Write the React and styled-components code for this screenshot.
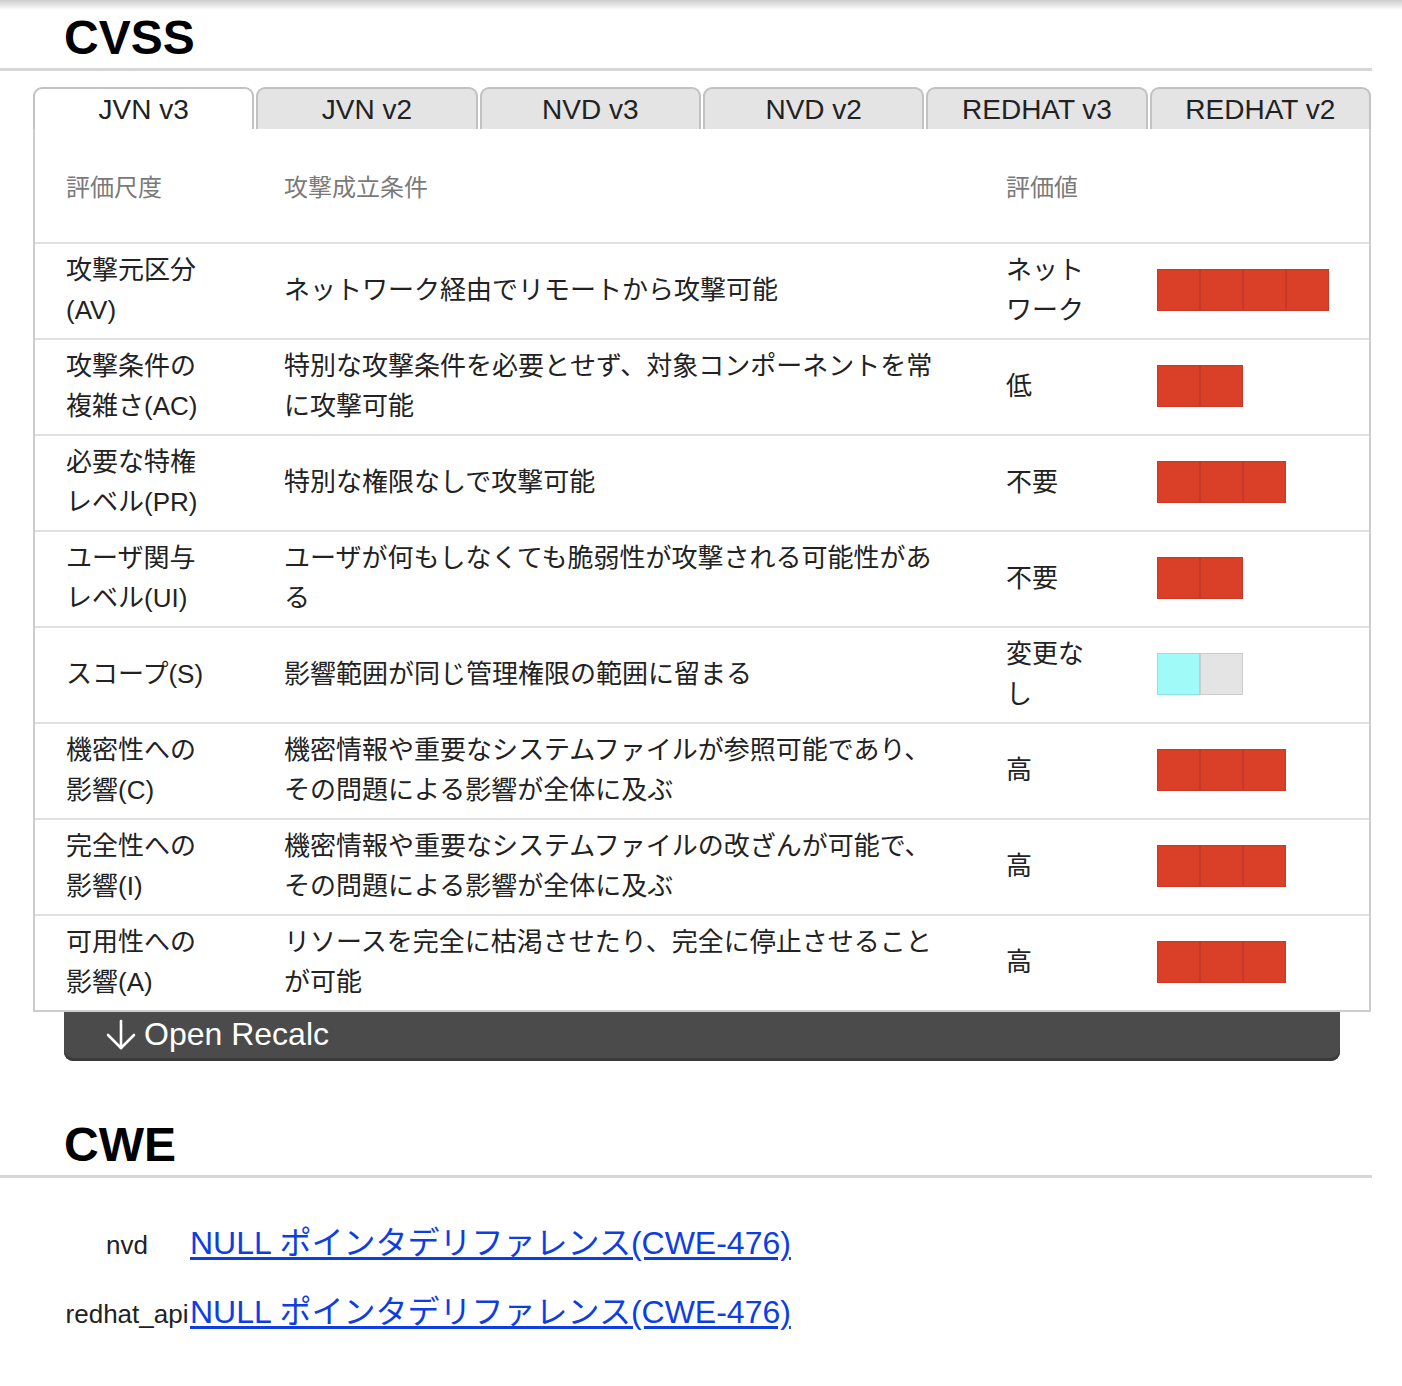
import React from 'react'
import styled, { createGlobalStyle } from 'styled-components'

const GlobalStyle = createGlobalStyle`
    body {
        margin: 0;
        background: #ffffff;
        font-family: "Liberation Sans", "Noto Sans CJK JP", sans-serif;
        color: #222222;
    }
`

const TopShadow = styled.div`
    height: 10px;
    background: linear-gradient(to bottom, rgba(0, 0, 0, 0.2), rgba(0, 0, 0, 0));
`

const Page = styled.div`
    width: 1372px;
    padding-bottom: 40px;
`

const SectionTitle = styled.h2`
    margin: ${(props) => props.$top}px 0 0;
    padding-left: 64px;
    font-size: 48px;
    line-height: 48px;
    font-weight: bold;
    color: #000000;
`

const Rule = styled.div`
    height: 3px;
    margin-top: 6px;
    background: #d6d6d6;
`

const Tabs = styled.div`
    display: flex;
    gap: 2px;
    margin: 16px 0 0 33px;
    width: 1338px;
`

const Tab = styled.div`
    flex: 1;
    height: 38px;
    padding-top: 2px;
    box-sizing: content-box;
    border: 2px solid #c2c2c2;
    border-bottom: none;
    border-radius: 9px 9px 0 0;
    background: ${(props) => (props.$active ? '#ffffff' : '#e4e4e4')};
    display: flex;
    align-items: center;
    justify-content: center;
    font-size: 28px;
    color: #222222;
`

const Panel = styled.div`
    margin-left: 33px;
    width: 1338px;
    box-sizing: border-box;
    border: 2px solid #cdcdcd;
    border-top: none;
`

const Table = styled.table`
    width: 100%;
    table-layout: fixed;
    border-collapse: separate;
    border-spacing: 0;
`

const HeadCell = styled.th`
    height: 113px;
    padding: 0 32px 0 31px;
    text-align: left;
    vertical-align: middle;
    font-size: 24px;
    font-weight: normal;
    color: #7a7a7a;
`

const Cell = styled.td`
    height: 96px;
    box-sizing: border-box;
    padding: 0 32px 2px 31px;
    border-top: 2px solid #e0e0e0;
    vertical-align: middle;
    font-size: 26px;
    line-height: 40px;
    color: #222222;
`

const Bar = styled.div`
    display: flex;
    padding-left: 1px;
`

const segmentColors = {
    red: ['#da3f27', '#c6382a'],
    cyan: ['#9ffaf8', '#8ee2e6'],
    off: ['#e4e4e4', '#cdcdcd'],
}

const Segment = styled.span`
    width: 43px;
    height: 42px;
    box-sizing: border-box;
    background: ${(props) => segmentColors[props.$kind][0]};
    border: 1px solid ${(props) => segmentColors[props.$kind][1]};
`

const RecalcBar = styled.div`
    margin-left: 64px;
    width: 1276px;
    height: 49px;
    box-sizing: border-box;
    padding-left: 40px;
    padding-bottom: 4px;
    background: #4b4b4b;
    border-radius: 0 0 9px 9px;
    box-shadow: inset 0 -3px 0 #3b3b3b;
    display: flex;
    align-items: center;
    gap: 6px;
    font-size: 32px;
    color: #ffffff;
`

const CweList = styled.div`
    margin-top: 45px;
    display: flex;
    flex-direction: column;
    gap: 29px;
`

const CweRow = styled.div`
    display: flex;
    align-items: baseline;
`

const Source = styled.span`
    width: 126px;
    margin-left: 64px;
    text-align: center;
    font-size: 26px;
    color: #222222;
    white-space: nowrap;
`

const CweLink = styled.a`
    font-size: 32px;
    line-height: 40px;
    color: #0d3ee3;
    text-decoration: underline;
    text-underline-offset: 3px;
`

const metrics = [
    { name: '攻撃元区分(AV)', cond: 'ネットワーク経由でリモートから攻撃可能', value: 'ネットワーク', bar: ['red', 'red', 'red', 'red'] },
    { name: '攻撃条件の複雑さ(AC)', cond: '特別な攻撃条件を必要とせず、対象コンポーネントを常に攻撃可能', value: '低', bar: ['red', 'red'] },
    { name: '必要な特権レベル(PR)', cond: '特別な権限なしで攻撃可能', value: '不要', bar: ['red', 'red', 'red'] },
    { name: 'ユーザ関与レベル(UI)', cond: 'ユーザが何もしなくても脆弱性が攻撃される可能性がある', value: '不要', bar: ['red', 'red'] },
    { name: 'スコープ(S)', cond: '影響範囲が同じ管理権限の範囲に留まる', value: '変更なし', bar: ['cyan', 'off'] },
    { name: '機密性への影響(C)', cond: '機密情報や重要なシステムファイルが参照可能であり、その問題による影響が全体に及ぶ', value: '高', bar: ['red', 'red', 'red'] },
    { name: '完全性への影響(I)', cond: '機密情報や重要なシステムファイルの改ざんが可能で、その問題による影響が全体に及ぶ', value: '高', bar: ['red', 'red', 'red'] },
    { name: '可用性への影響(A)', cond: 'リソースを完全に枯渇させたり、完全に停止させることが可能', value: '高', bar: ['red', 'red', 'red'] },
]

const tabs = ['JVN v3', 'JVN v2', 'NVD v3', 'NVD v2', 'REDHAT v3', 'REDHAT v2']

const cwes = [
    { source: 'nvd', label: 'NULL ポインタデリファレンス(CWE-476)' },
    { source: 'redhat_api', label: 'NULL ポインタデリファレンス(CWE-476)' },
]

function ArrowDown() {
    return (
        <svg width="34" height="34" viewBox="0 0 34 34" fill="none" stroke="#ffffff" strokeWidth="2.6" strokeLinecap="round" strokeLinejoin="round">
            <path d="M17 3v27" />
            <path d="M4 17l13 13 13-13" />
        </svg>
    )
}

function App() {
    return (
        <>
            <GlobalStyle />
            <TopShadow />
            <Page>
                <SectionTitle $top={4}>CVSS</SectionTitle>
                <Rule />
                <Tabs>
                    {tabs.map((t, i) => (
                        <Tab key={t} $active={i === 0}>
                            {t}
                        </Tab>
                    ))}
                </Tabs>
                <Panel>
                    <Table>
                        <colgroup>
                            <col style={{ width: 218 }} />
                            <col style={{ width: 722 }} />
                            <col style={{ width: 150 }} />
                            <col style={{ width: 244 }} />
                        </colgroup>
                        <thead>
                            <tr>
                                <HeadCell>評価尺度</HeadCell>
                                <HeadCell>攻撃成立条件</HeadCell>
                                <HeadCell>評価値</HeadCell>
                                <HeadCell />
                            </tr>
                        </thead>
                        <tbody>
                            {metrics.map((m) => (
                                <tr key={m.name}>
                                    <Cell>{m.name}</Cell>
                                    <Cell>{m.cond}</Cell>
                                    <Cell>{m.value}</Cell>
                                    <Cell>
                                        <Bar>
                                            {m.bar.map((kind, i) => (
                                                <Segment key={i} $kind={kind} />
                                            ))}
                                        </Bar>
                                    </Cell>
                                </tr>
                            ))}
                        </tbody>
                    </Table>
                </Panel>
                <RecalcBar>
                    <ArrowDown />
                    Open Recalc
                </RecalcBar>
                <SectionTitle $top={60}>CWE</SectionTitle>
                <Rule />
                <CweList>
                    {cwes.map((c) => (
                        <CweRow key={c.source}>
                            <Source>{c.source}</Source>
                            <CweLink href="#">{c.label}</CweLink>
                        </CweRow>
                    ))}
                </CweList>
            </Page>
        </>
    )
}

export default App
